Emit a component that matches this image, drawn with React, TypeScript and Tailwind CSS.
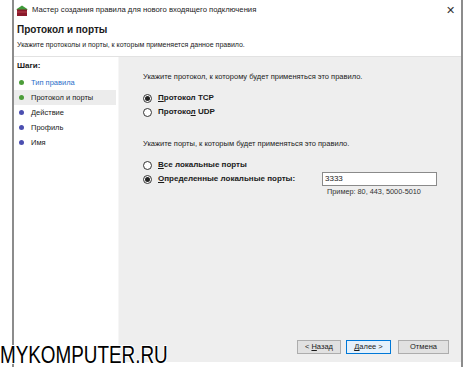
import React from "react";

const STEPS = [
  { label: "Тип правила", done: true, active: false },
  { label: "Протокол и порты", done: true, active: true },
  { label: "Действие", done: false, active: false },
  { label: "Профиль", done: false, active: false },
  { label: "Имя", done: false, active: false },
];

function Radio({ checked }: { checked?: boolean }) {
  return (
    <span className="w-[9px] h-[9px] rounded-full border border-[#333] bg-white flex items-center justify-center shrink-0">
      {checked && <span className="w-[5px] h-[5px] rounded-full bg-[#222]" />}
    </span>
  );
}

function FirewallIcon() {
  return (
    <svg width="12" height="11" viewBox="0 0 12 11">
      <rect x="1" y="4" width="10" height="7" fill="#8b1a2b" />
      <rect x="1" y="6.5" width="10" height="1" fill="#b8404f" />
      <path d="M0 4.5 L6 0.5 L12 4.5 Z" fill="#3f9a3a" />
    </svg>
  );
}

export default function App() {
  return (
    <div
      className="relative w-[474px] h-[367px] bg-white overflow-hidden text-[8px] text-[#1a1a1a]"
      style={{ fontFamily: '"Liberation Sans", Arial, sans-serif' }}
    >
      <div className="flex h-full pl-[12px]">
        <div className="w-[451px] h-full border-l-2 border-r-2 border-[#8c8c8c] flex flex-col">
          {/* title bar */}
          <div className="h-[20px] flex items-center pl-[2px] pr-[6px]">
            <FirewallIcon />
            <span className="ml-[4px] text-[7.7px] text-[#222]">
              Мастер создания правила для нового входящего подключения
            </span>
            <span className="ml-auto text-[11px] leading-none text-[#333]">✕</span>
          </div>

          {/* header */}
          <div className="h-[37px] pl-[3px] border-b border-[#e2e2e2]">
            <div className="mt-[3px] text-[10px] font-bold leading-[14px]">Протокол и порты</div>
            <div className="mt-[3px] text-[7px] leading-[10px]">
              Укажите протоколы и порты, к которым применяется данное правило.
            </div>
          </div>

          {/* body */}
          <div className="flex flex-1">
            <div className="w-[104px] bg-white pt-[3px]">
              <div className="pl-[3px] text-[8px] font-bold leading-[12px]">Шаги:</div>
              <div className="mt-[3px] flex flex-col">
                {STEPS.map((s) => (
                  <div
                    key={s.label}
                    className={
                      "h-[15px] flex items-center pl-[5px] mr-[2px] " +
                      (s.active ? "bg-[#ececec]" : "")
                    }
                  >
                    <span
                      className={
                        "w-[5px] h-[5px] rounded-full " +
                        (s.done ? "bg-[#4c9d3a]" : "bg-[#4b4fb0]")
                      }
                    />
                    <span
                      className={
                        "ml-[7px] text-[7.5px] " + (s.label === "Тип правила" ? "text-[#2a6fc9]" : "")
                      }
                    >
                      {s.label}
                    </span>
                  </div>
                ))}
              </div>
            </div>

            <div className="flex-1 bg-[#eeeeee] border-l border-[#f6f6f6] flex flex-col pl-[24px] pr-[12px] pb-[8px]">
              <div className="mt-[15px] text-[7.5px] leading-[10px]">
                Укажите протокол, к которому будет применяться это правило.
              </div>
              <div className="mt-[10px] flex items-center gap-[6px] h-[12px]">
                <Radio checked />
                <span className="font-bold text-[8px]">
                  <u>П</u>ротокол TCP
                </span>
              </div>
              <div className="mt-[2px] flex items-center gap-[6px] h-[12px]">
                <Radio />
                <span className="font-bold text-[8px]">
                  Протоко<u>л</u> UDP
                </span>
              </div>
              <div className="mt-[21px] text-[7.5px] leading-[10px]">
                Укажите порты, к которым будет применяться это правило.
              </div>
              <div className="mt-[10px] flex items-center gap-[6px] h-[12px]">
                <Radio />
                <span className="font-bold text-[8px]">
                  <u>В</u>се локальные порты
                </span>
              </div>
              <div className="mt-[2px] flex items-center h-[12px]">
                <Radio checked />
                <span className="ml-[6px] font-bold text-[8px] w-[164px]">
                  <u>О</u>пределенные локальные порты:
                </span>
                <div className="w-[115px] h-[14px] bg-white border border-[#8a8a8a] flex items-center pl-[2px] text-[8px]">
                  3333
                </div>
              </div>
              <div className="mt-[2px] pl-[184px] text-[7.3px] text-[#333]">Пример: 80, 443, 5000-5010</div>

              <div className="mt-auto flex justify-end">
                <div className="w-[44px] h-[14px] bg-[#e1e1e1] border border-[#adadad] flex items-center justify-center text-[7.5px]">
                  &lt; <u className="ml-[2px]">Н</u>азад
                </div>
                <div className="ml-[5px] w-[45px] h-[14px] bg-[#e5f1fb] border border-[#0078d7] flex items-center justify-center text-[7.5px]">
                  <u>Д</u>алее &gt;
                </div>
                <div className="ml-[7px] w-[51px] h-[14px] bg-[#e1e1e1] border border-[#adadad] flex items-center justify-center text-[7.5px]">
                  Отмена
                </div>
              </div>
            </div>
          </div>
          <div className="h-[5px] bg-white" />
        </div>
      </div>

      <div
        className="absolute left-0 bottom-0 text-[23px] leading-none text-black origin-left scale-x-[0.82]"
        style={{
          fontFamily: '"Liberation Sans", sans-serif',
          textShadow: "1px 1px 0 #fff, -1px -1px 0 #fff, 1px -1px 0 #fff, -1px 1px 0 #fff",
        }}
      >
        MYKOMPUTER.RU
      </div>
    </div>
  );
}
